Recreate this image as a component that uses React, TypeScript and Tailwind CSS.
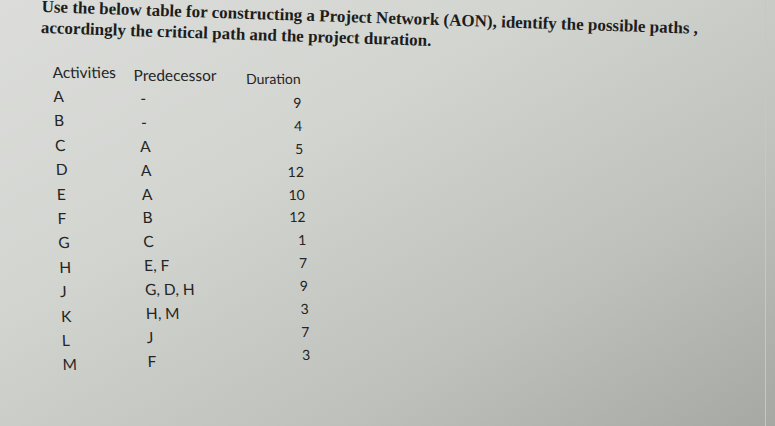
import React from 'react';

const rows = [
  { act: 'A', pred: '-', dur: '9' },
  { act: 'B', pred: '-', dur: '4' },
  { act: 'C', pred: 'A', dur: '5' },
  { act: 'D', pred: 'A', dur: '12' },
  { act: 'E', pred: 'A', dur: '10' },
  { act: 'F', pred: 'B', dur: '12' },
  { act: 'G', pred: 'C', dur: '1' },
  { act: 'H', pred: 'E, F', dur: '7' },
  { act: 'J', pred: 'G, D, H', dur: '9' },
  { act: 'K', pred: 'H, M', dur: '3' },
  { act: 'L', pred: 'J', dur: '7' },
  { act: 'M', pred: 'F', dur: '3' },
];

const App = () => {
  return (
    <div className="relative w-[775px] h-[426px] overflow-hidden bg-[linear-gradient(150deg,#dcddda_0%,#d3d5d1_35%,#bfc1bd_70%,#a6a8a4_100%)]">
      {/* Question heading - printed page, slightly tilted in the photo */}
      <div
        className="ml-[42px] mt-[-4px] origin-top-left rotate-[1.9deg] whitespace-nowrap text-[17px] leading-[21px] font-bold text-[#1c1d1c]"
        style={{ fontFamily: '"Liberation Serif", "Times New Roman", serif' }}
      >
        Use the below table for constructing a Project Network (AON), identify the possible paths ,
        <br />
        accordingly the critical path and the project duration.
      </div>

      {/* Activity table */}
      <div
        className="absolute left-[52px] top-[60px] flex origin-top-left skew-x-2 text-[15.5px] text-[#242524]"
        style={{ fontFamily: 'Lato, "Open Sans", sans-serif' }}
      >
        <div className="flex w-[81px] flex-col">
          <div className="h-[24px] leading-[24px]">Activities</div>
          {rows.map((r) => (
            <div key={r.act} className="h-[24.4px] leading-[24px]">
              {r.act}
            </div>
          ))}
        </div>

        <div className="mt-[3px] flex w-[111px] flex-col">
          <div className="h-[23px] leading-[24px]">Predecessor</div>
          {rows.map((r) => (
            <div key={r.act} className={`h-[23.9px] leading-[24px] ${r.pred === '-' ? 'pl-[6px]' : 'pl-[4px]'}`}>
              {r.pred}
            </div>
          ))}
        </div>

        <div className="mt-[7px] flex w-[56px] flex-col text-[14px]">
          <div className="h-[24px] leading-[24px] text-right">Duration</div>
          {rows.map((r) => (
            <div key={r.act} className="h-[22.9px] leading-[24px] text-right">
              {r.dur}
            </div>
          ))}
        </div>
      </div>

      {/* faint page edge on the right */}
      <div className="absolute right-[9px] top-0 h-full w-px bg-[#c6c8c4]" />
    </div>
  );
};

export default App;
